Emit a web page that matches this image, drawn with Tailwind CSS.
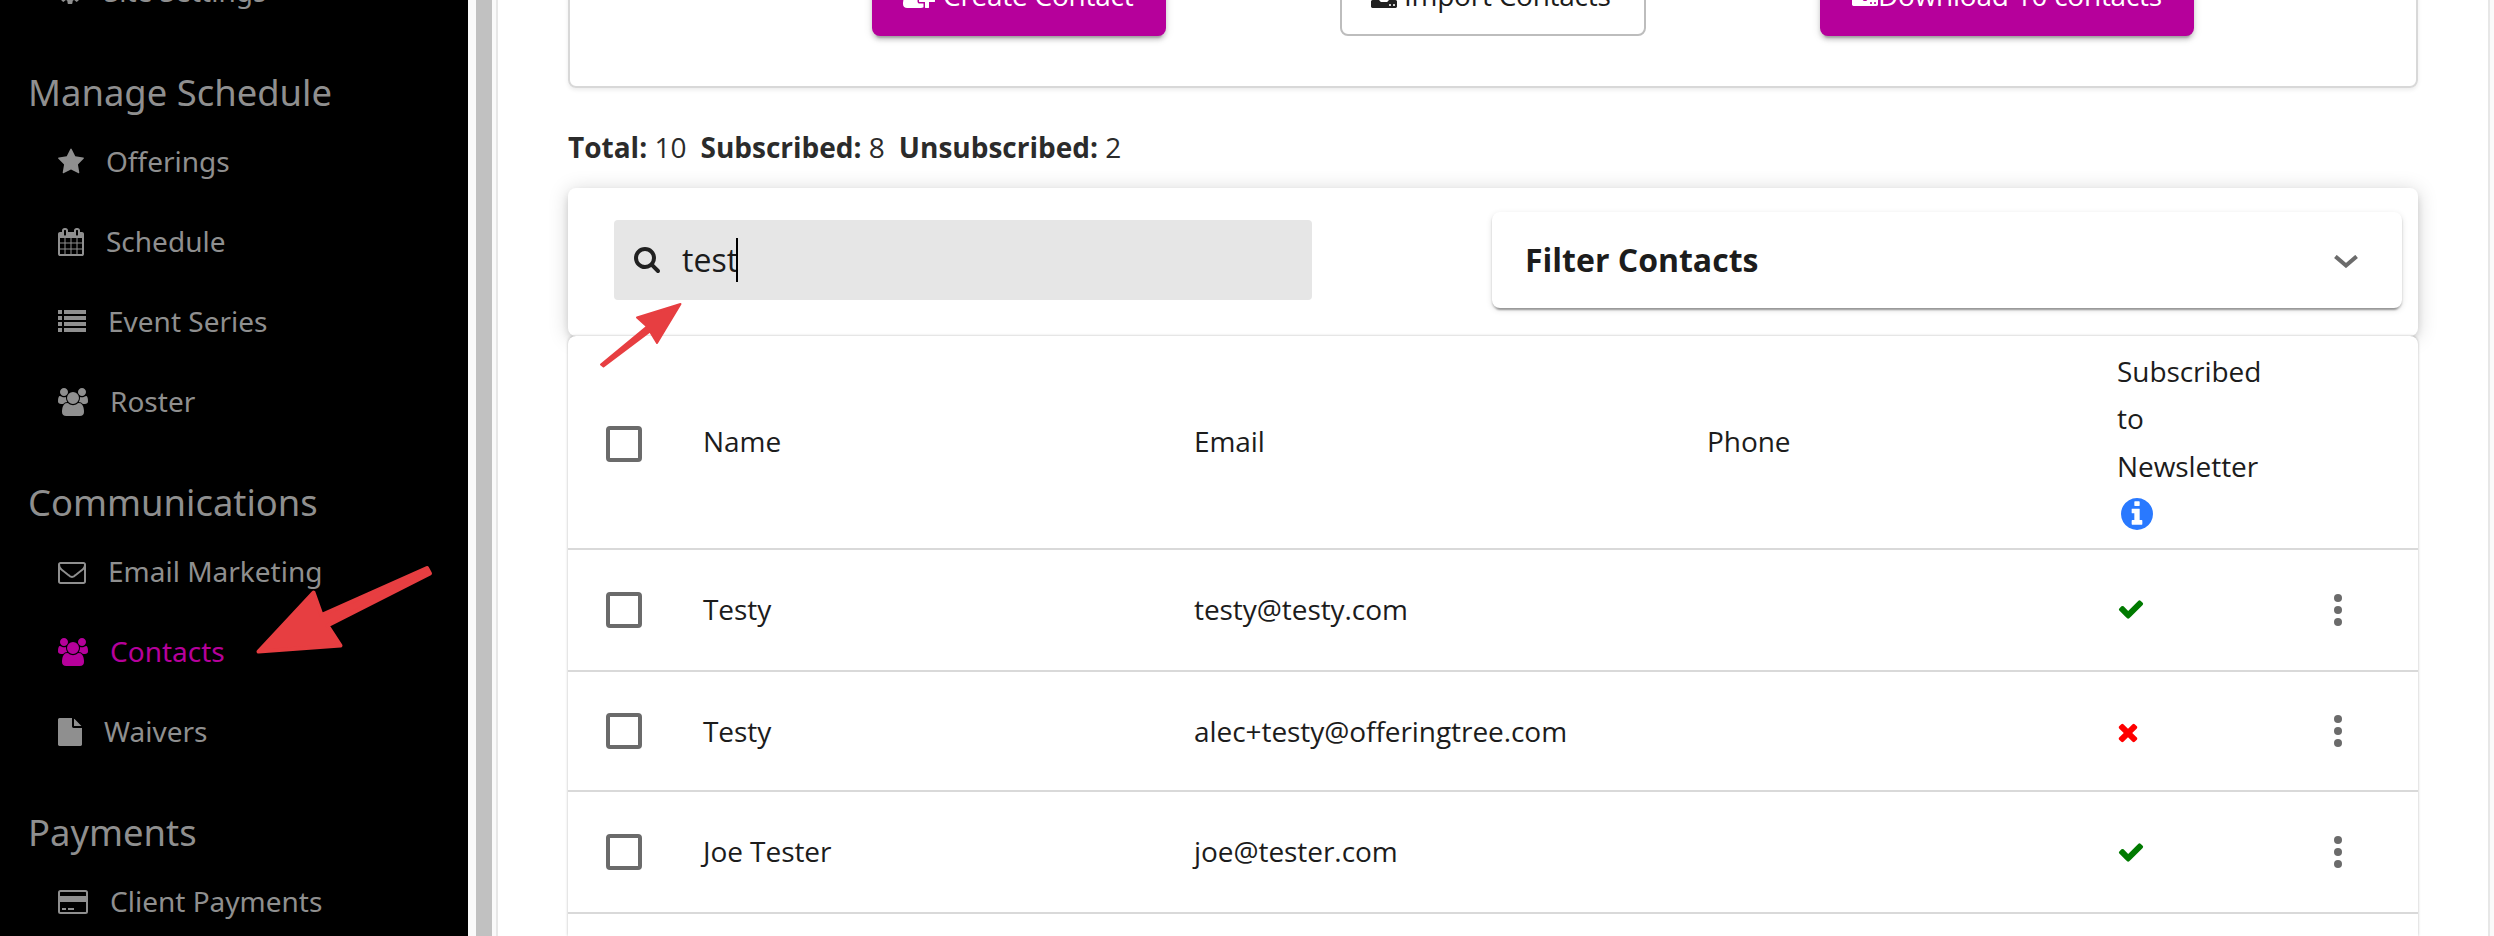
<!doctype html>
<html lang="en">
<head>
    <meta charset="UTF-8">
    <meta name="viewport" content="width=device-width, initial-scale=1.0">
    <title>Contacts</title>
    <script src="https://cdn.jsdelivr.net/npm/@tailwindcss/browser@4"></script>
</head>
<body class="h-[936px] overflow-hidden bg-[#fafafa] font-['Open_Sans','Noto_Sans',sans-serif] text-[28px] text-[#1c1c1c]">

<!-- Icon shapes used more than once -->
<svg class="hidden">
    <symbol id="users" viewBox="-64 0 1920 1792">
        <path d="M529 896q-162 5-265 128h-134q-82 0-138-40.5t-56-118.5q0-353 124-353 6 0 43.5 21t97.5 42.5 119 21.5q67 0 133-23-5 37-5 66 0 139 81 256zm1071 637q0 120-73 189.5t-194 69.5h-874q-121 0-194-69.5t-73-189.5q0-53 3.5-103.5t14-109 26.5-108.5 43-97.5 62-81 85.5-53.5 111.5-20q10 0 43 21.5t73 48 107 48 135 21.5 135-21.5 107-48 73-48 43-21.5q61 0 111.5 20t85.5 53.5 62 81 43 97.5 26.5 108.5 14 109 3.5 103.5zm-1024-1277q0 106-75 181t-181 75-181-75-75-181 75-181 181-75 181 75 75 181zm704 384q0 159-112.5 271.5t-271.5 112.5-271.5-112.5-112.5-271.5 112.5-271.5 271.5-112.5 271.5 112.5 112.5 271.5zm576 225q0 78-56 118.5t-138 40.5h-134q-103-123-265-128 81-117 81-256 0-29-5-66 66 23 133 23 59 0 119-21.5t97.5-42.5 43.5-21q124 0 124 353zm-128-609q0 106-75 181t-181 75-181-75-75-181 75-181 181-75 181 75 75 181z"/>
    </symbol>
    <symbol id="check" viewBox="0 0 1792 1792">
        <path d="M1671 566q0 40-28 68l-724 724-136 136q-28 28-68 28t-68-28l-136-136-362-362q-28-28-28-68t28-68l136-136q28-28 68-28t68 28l294 295 656-657q28-28 68-28t68 28l136 136q28 28 28 68z"/>
    </symbol>
    <symbol id="dots" viewBox="0 0 8 32">
        <circle cx="4" cy="4" r="4"/><circle cx="4" cy="16" r="4"/><circle cx="4" cy="28" r="4"/>
    </symbol>
</svg>

<div class="flex h-full">

    <!-- Sidebar -->
    <nav class="w-[468px] shrink-0 overflow-hidden bg-black font-['Noto_Sans',sans-serif] text-[#8f8f8f] fill-[#8f8f8f]">
        <ul class="-mt-[49px] pl-[58px]">
            <li class="flex h-20 items-center gap-[22px]">
                <svg class="mt-0.5 h-7 w-6" viewBox="128 0 1536 1792"><path d="M1152 896q0-106-75-181t-181-75-181 75-75 181 75 181 181 75 181-75 75-181zm512-109v222q0 12-8 23t-20 13l-185 28q-19 54-39 91 35 50 107 138 10 12 10 25t-9 23q-27 37-99 108t-94 71q-12 0-26-9l-138-108q-44 23-91 38-16 136-29 186-7 28-36 28h-222q-14 0-24.5-8.5t-11.5-21.5l-28-184q-49-16-90-37l-141 107q-10 9-25 9-14 0-25-11-126-114-165-168-7-10-7-23 0-12 8-23 15-21 51-66.5t54-70.5q-27-50-41-99l-183-27q-13-2-21-12.5t-8-23.5v-222q0-12 8-23t19-13l186-28q14-46 39-92-40-57-107-138-10-12-10-24 0-10 9-23 26-36 98.5-107.5t94.5-71.5q13 0 26 10l138 107q44-23 91-38 16-136 29-186 7-28 36-28h222q14 0 24.5 8.5t11.5 21.5l28 184q49 16 90 37l142-107q9-9 24-9 13 0 25 10 129 119 165 170 7 8 7 22 0 12-8 23-15 21-51 66.5t-54 70.5q26 50 41 98l183 28q13 2 21 12.5t8 23.5z"/></svg>
                Site Settings
            </li>
        </ul>

        <h2 class="h-[90px] pt-9 pl-7 text-[36.4px] leading-[50px]">Manage Schedule</h2>
        <ul class="pl-[58px]">
            <li class="flex h-20 items-center gap-[22px]">
                <svg class="mt-0.5 h-7 w-[26px]" viewBox="64 0 1664 1792"><path d="M1728 647q0 22-26 48l-363 354 86 500q1 7 1 20 0 21-10.5 35.5t-30.5 14.5q-19 0-40-12l-449-236-449 236q-22 12-40 12-21 0-31.5-14.5t-10.5-35.5q0-6 2-20l86-500-364-354q-25-27-25-48 0-37 56-46l502-73 225-455q19-41 49-41t49 41l225 455 502 73q56 9 56 46z"/></svg>
                Offerings
            </li>
            <li class="flex h-20 items-center gap-[22px]">
                <svg class="mt-0.5 h-7 w-[26px]" viewBox="64 0 1664 1792"><path d="M192 1664h288v-288h-288v288zm352 0h320v-288h-320v288zm-352-352h288v-320h-288v320zm352 0h320v-320h-320v320zm-352-384h288v-288h-288v288zm736 736h320v-288h-320v288zm-384-736h320v-288h-320v288zm768 736h288v-288h-288v288zm-384-352h320v-320h-320v320zm-352-864v-288q0-13-9.5-22.5t-22.5-9.5h-64q-13 0-22.5 9.5t-9.5 22.5v288q0 13 9.5 22.5t22.5 9.5h64q13 0 22.5-9.5t9.5-22.5zm736 864h288v-320h-288v320zm-384-384h320v-288h-320v288zm384 0h288v-288h-288v288zm32-480v-288q0-13-9.5-22.5t-22.5-9.5h-64q-13 0-22.5 9.5t-9.5 22.5v288q0 13 9.5 22.5t22.5 9.5h64q13 0 22.5-9.5t9.5-22.5zm384-64v1280q0 52-38 90t-90 38h-1408q-52 0-90-38t-38-90v-1280q0-52 38-90t90-38h128v-96q0-66 47-113t113-47h64q66 0 113 47t47 113v96h384v-96q0-66 47-113t113-47h64q66 0 113 47t47 113v96h128q52 0 90 38t38 90z"/></svg>
                Schedule
            </li>
            <li class="flex h-20 items-center gap-[22px]">
                <svg class="mt-0.5 size-7" viewBox="0 0 28 28">
                    <path d="M0 2h4v4H0zM6 2h22v4H6zM0 8h4v4H0zM6 8h22v4H6zM0 14h4v4H0zM6 14h22v4H6zM0 20h4v4H0zM6 20h22v4H6z"/>
                </svg>
                Event Series
            </li>
            <li class="flex h-20 items-center gap-[22px]">
                <svg class="mt-0.5 h-7 w-[30px]"><use href="#users"/></svg>
                Roster
            </li>
        </ul>

        <h2 class="h-[90px] pt-9 pl-7 text-[36.4px] leading-[50px]">Communications</h2>
        <ul class="pl-[58px]">
            <li class="flex h-20 items-center gap-[22px]">
                <svg class="mt-0.5 size-7" viewBox="0 0 1792 1792"><path d="M1664 1504v-768q-32 36-69 66-268 206-426 338-51 43-83 67t-86.5 48.5-102.5 24.5h-2q-48 0-102.5-24.5t-86.5-48.5-83-67q-158-132-426-338-37-30-69-66v768q0 13 9.5 22.5t22.5 9.5h1472q13 0 22.5-9.5t9.5-22.5zm0-1051v-24.5l-.5-13-3-12.5-5.5-9-9-7.5-14-2.5h-1472q-13 0-22.5 9.5t-9.5 22.5q0 168 147 284 193 152 401 317 6 5 35 29.5t46 37.5 44.5 31.5 50.5 27.5 43 9h2q20 0 43-9t50.5-27.5 44.5-31.5 46-37.5 35-29.5q208-165 401-317 54-43 100.5-115.5t46.5-131.5zm128-37v1088q0 66-47 113t-113 47h-1472q-66 0-113-47t-47-113v-1088q0-66 47-113t113-47h1472q66 0 113 47t47 113z"/></svg>
                Email Marketing
            </li>
            <li class="flex h-20 items-center gap-[22px] fill-[#b6009b] text-[#b6009b]">
                <svg class="mt-0.5 h-7 w-[30px]"><use href="#users"/></svg>
                Contacts
            </li>
            <li class="flex h-20 items-center gap-[22px]">
                <svg class="mt-0.5 h-7 w-6" viewBox="128 0 1536 1792"><path d="M1152 512v-472q22 14 36 28l408 408q14 14 28 36h-472zm-128 32q0 40 28 68t68 28h544v1056q0 40-28 68t-68 28h-1344q-40 0-68-28t-28-68v-1600q0-40 28-68t68-28h800v544z"/></svg>
                Waivers
            </li>
        </ul>

        <h2 class="h-[90px] pt-9 pl-7 text-[36.4px] leading-[50px]">Payments</h2>
        <ul class="pl-[58px]">
            <li class="flex h-20 items-center gap-[22px]">
                <svg class="mt-0.5 h-7 w-[30px]" viewBox="0 0 30 28">
                    <rect x="1" y="3" width="28" height="22" rx="1.5" fill="none" stroke="#8f8f8f" stroke-width="2"/>
                    <path d="M1 8h28v6H1zM4 20h4v2H4zM10 20h6v2h-6z"/>
                </svg>
                Client Payments
            </li>
        </ul>
    </nav>

    <!-- Sidebar scrollbar -->
    <div class="ml-2 mr-1 w-4 shrink-0 bg-[#c1c1c1]"></div>

    <main class="mr-1 w-[1994px] shrink-0 border-x-2 border-[#e7e7e7] bg-white pl-[70px]">

        <!-- Actions -->
        <section class="-mt-[100px] flex h-[188px] w-[1850px] items-end gap-[174px] rounded-lg border-2 border-[#d8d8d8] pb-[50px] pl-[302px] tracking-[-0.25px] shadow-[0_2px_4px_rgba(0,0,0,0.08)]">
            <button class="flex h-[82px] w-[294px] items-center rounded-lg bg-[#b6009b] pl-[31px] font-medium text-white shadow-[0_6px_2px_-4px_rgba(0,0,0,0.2),0_4px_4px_rgba(0,0,0,0.14),0_2px_10px_rgba(0,0,0,0.12)]">
                <svg class="mt-0.5 mr-2 h-7 w-8 fill-white" viewBox="0 0 2048 1792"><path d="M1664 1024h352q13 0 22.5 9.5t9.5 22.5v192q0 13-9.5 22.5t-22.5 9.5h-352v352q0 13-9.5 22.5t-22.5 9.5h-192q-13 0-22.5-9.5t-9.5-22.5v-352h-352q-13 0-22.5-9.5t-9.5-22.5v-192q0-13 9.5-22.5t22.5-9.5h352v-352q0-13 9.5-22.5t22.5-9.5h192q13 0 22.5 9.5t9.5 22.5v352zm-736 224q0 52 38 90t90 38h256v238q-68 50-171 50h-874q-121 0-194-69t-73-190q0-53 3.5-103.5t14-109 26.5-108.5 43-97.5 62-81 85.5-53.5 111.5-20q19 0 39 17 79 61 154.5 91.5t164.5 30.5 164.5-30.5 154.5-91.5q20-17 39-17 132 0 217 96h-223q-52 0-90 38t-38 90v192z"/></svg>
                Create Contact
            </button>
            <button class="flex h-[82px] w-[306px] items-center rounded-lg border-2 border-[#bdbdbd] pl-[29px] font-medium">
                <svg class="mt-0.5 mr-[7px] h-7 w-[26px] fill-[#212121]" viewBox="64 0 1664 1792"><path d="M1344 1472q0-26-19-45t-45-19-45 19-19 45 19 45 45 19 45-19 19-45zm256 0q0-26-19-45t-45-19-45 19-19 45 19 45 45 19 45-19 19-45zm128-224v320q0 40-28 68t-68 28h-1472q-40 0-68-28t-28-68v-320q0-40 28-68t68-28h427q21 56 70.5 92t110.5 36h256q61 0 110.5-36t70.5-92h427q40 0 68 28t28 68zm-325-648q-17 40-59 40h-256v448q0 26-19 45t-45 19h-256q-26 0-45-19t-19-45v-448h-256q-42 0-59-40-17-39 14-69l448-448q18-19 45-19t45 19l448 448q31 30 14 69z"/></svg>
                Import Contacts
            </button>
            <button class="flex h-[82px] w-[374px] items-center rounded-lg bg-[#b6009b] pl-8 font-medium text-white shadow-[0_6px_2px_-4px_rgba(0,0,0,0.2),0_4px_4px_rgba(0,0,0,0.14),0_2px_10px_rgba(0,0,0,0.12)]">
                <svg class="mt-0.5 h-7 w-[26px] fill-white" viewBox="64 0 1664 1792"><path d="M1344 1344q0-26-19-45t-45-19-45 19-19 45 19 45 45 19 45-19 19-45zm256 0q0-26-19-45t-45-19-45 19-19 45 19 45 45 19 45-19 19-45zm128-224v320q0 40-28 68t-68 28h-1472q-40 0-68-28t-28-68v-320q0-40 28-68t68-28h465l135 136q58 56 136 56t136-56l136-136h464q40 0 68 28t28 68zm-325-569q17 41-14 70l-448 448q-18 19-45 19t-45-19l-448-448q-31-29-14-70 17-39 59-39h256v-448q0-26 19-45t45-19h256q26 0 45 19t19 45v448h256q42 0 59 39z"/></svg>
                Download 10 contacts
            </button>
        </section>

        <p class="flex h-[100px] gap-[14px] pt-[39px] leading-[40px] text-[#2b2b2b]">
            <span><b>Total:</b> 10</span>
            <span><b>Subscribed:</b> 8</span>
            <span><b>Unsubscribed:</b> 2</span>
        </p>

        <!-- Search and filter -->
        <section class="flex h-[148px] w-[1850px] justify-between rounded-lg bg-white pr-4 pl-[46px] text-[32px] shadow-[0_4px_8px_-2px_rgba(0,0,0,0.2),0_2px_20px_rgba(0,0,0,0.17)]">
            <div class="mt-8 flex h-20 w-[698px] items-center rounded bg-[#e6e6e6] pl-5">
                <svg class="mr-[22px] size-[26px] fill-[#212121]" viewBox="64 128 1664 1664"><path d="M1216 832q0-185-131.5-316.5t-316.5-131.5-316.5 131.5-131.5 316.5 131.5 316.5 316.5 131.5 316.5-131.5 131.5-316.5zm512 832q0 52-38 90t-90 38q-54 0-90-38l-343-342q-179 124-399 124-143 0-273.5-55.5t-225-150-150-225-55.5-273.5 55.5-273.5 150-225 225-150 273.5-55.5 273.5 55.5 225 150 150 225 55.5 273.5q0 220-124 399l343 343q37 37 37 90z"/></svg>
                <span>test</span>
                <span class="-ml-0.5 h-11 w-0.5 bg-black"></span>
            </div>
            <div class="mt-6 flex h-24 w-[910px] items-center justify-between rounded-lg bg-white pr-[44px] pl-[33px] font-bold shadow-[0_6px_2px_-4px_rgba(0,0,0,0.2),0_2px_2px_rgba(0,0,0,0.2),0_2px_6px_rgba(0,0,0,0.12)]">
                Filter Contacts
                <svg class="mt-0.5 h-[13px] w-6" viewBox="0 0 24 13" fill="none" stroke="#6b6b6b" stroke-width="4"><path d="M1.4 1.4 12 10.5 22.6 1.4"/></svg>
            </div>
        </section>

        <!-- Contacts -->
        <section class="relative h-[600px] w-[1850px] rounded-t-lg bg-white tracking-[-0.06px] shadow-[0_0_3px_rgba(0,0,0,0.28)]">
            <div class="grid h-[214px] grid-cols-[135px_491px_513px_410px_217px_auto] items-center border-b-2 border-[#d9d9d9]">
                <span class="mt-1 ml-[38px] size-9 rounded border-4 border-[#6b6b6b]"></span>
                <span class="mb-[3px]">Name</span>
                <span class="mb-[3px]">Email</span>
                <span class="mb-[3px]">Phone</span>
                <span class="leading-[47.6px]">Subscribed<br>to<br>Newsletter
                    <svg class="mt-2 mb-[6px] ml-1 size-8 fill-[#2979ff]" viewBox="128 128 1536 1536"><path d="M1152 1376v-160q0-14-9-23t-23-9h-96v-512q0-14-9-23t-23-9h-320q-14 0-23 9t-9 23v160q0 14 9 23t23 9h96v320h-96q-14 0-23 9t-9 23v160q0 14 9 23t23 9h448q14 0 23-9t9-23zm-128-896v-160q0-14-9-23t-23-9h-192q-14 0-23 9t-9 23v160q0 14 9 23t23 9h192q14 0 23-9t9-23zm640 416q0 209-103 385.5t-279.5 279.5-385.5 103-385.5-103-279.5-279.5-103-385.5 103-385.5 279.5-279.5 385.5-103 385.5 103 279.5 279.5 103 385.5z"/></svg>
                </span>
            </div>
            <div class="grid h-[122px] grid-cols-[135px_491px_513px_410px_217px_auto] items-center border-b-2 border-[#d9d9d9]">
                <span class="ml-[38px] size-9 rounded border-4 border-[#6b6b6b]"></span>
                <span class="mb-0.5">Testy</span>
                <span class="mb-0.5">testy@testy.com</span>
                <span></span>
                <svg class="-mt-0.5 size-7 fill-[#007a00]"><use href="#check"/></svg>
                <svg class="h-8 w-2 fill-[#6b6b6b]"><use href="#dots"/></svg>
            </div>
            <div class="grid h-[120px] grid-cols-[135px_491px_513px_410px_217px_auto] items-center border-b-2 border-[#d9d9d9]">
                <span class="ml-[38px] size-9 rounded border-4 border-[#6b6b6b]"></span>
                <span>Testy</span>
                <span>alec+testy@offeringtree.com</span>
                <span></span>
                <svg class="mt-0.5 h-7 w-[22px] fill-[#ff0000]" viewBox="192 0 1408 1792"><path d="M1490 1322q0 40-28 68l-136 136q-28 28-68 28t-68-28l-294-294-294 294q-28 28-68 28t-68-28l-136-136q-28-28-28-68t28-68l294-294-294-294q-28-28-28-68t28-68l136-136q28-28 68-28t68 28l294 294 294-294q28-28 68-28t68 28l136 136q28 28 28 68t-28 68l-294 294 294 294q28 28 28 68z"/></svg>
                <svg class="h-8 w-2 fill-[#6b6b6b]"><use href="#dots"/></svg>
            </div>
            <div class="grid h-[122px] grid-cols-[135px_491px_513px_410px_217px_auto] items-center border-b-2 border-[#d9d9d9]">
                <span class="ml-[38px] size-9 rounded border-4 border-[#6b6b6b]"></span>
                <span class="mb-0.5">Joe Tester</span>
                <span class="mb-0.5">joe@tester.com</span>
                <span></span>
                <svg class="size-7 fill-[#007a00]"><use href="#check"/></svg>
                <svg class="h-8 w-2 fill-[#6b6b6b]"><use href="#dots"/></svg>
            </div>
        </section>
    </main>
</div>

<!-- Red pointer arrows over the page -->
<svg class="absolute top-0 left-0 h-[936px] w-[700px] fill-[#e73e41] stroke-[#e73e41]" stroke-linejoin="round">
    <path stroke-width="4" d="M258.5 651.5 313.5 592.5 321.5 615 427 568 430 573.5 327.5 625.5 340.5 645.5Z"/>
    <path stroke-width="2" d="M680.5 304 637 317.5 647 326.5 601 364.5 603.5 366.5 650 331.5 657 343Z"/>
</svg>

</body>
</html>
